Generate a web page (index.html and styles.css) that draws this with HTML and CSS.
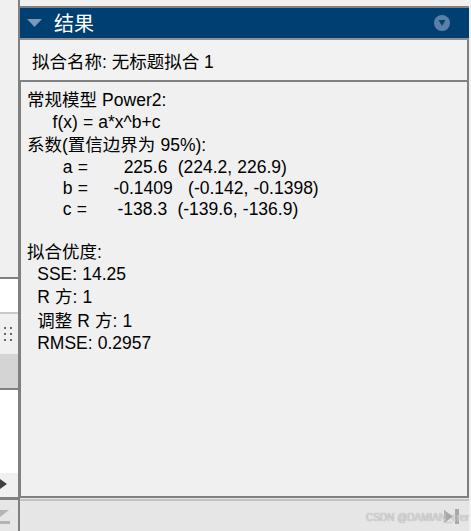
FILE: index.html
```html
<!DOCTYPE html>
<html lang="zh">
<head>
<meta charset="utf-8">
<title>结果</title>
<link rel="stylesheet" href="styles.css">
</head>
<body>
<div class="app">
  <div class="left">
    <div class="l-top"></div>
    <div class="l-line"></div>
    <div class="l-white1"></div>
    <div class="l-line-light"></div>
    <div class="l-grip">
      <div class="grip">
        <span></span><span></span><span></span><span></span><span></span><span></span>
      </div>
    </div>
    <div class="l-dark"></div>
    <div class="l-line"></div>
    <div class="l-white2"></div>
    <div class="l-arrow"><span class="tri-right"></span></div>
    <div class="l-line3"></div>
    <div class="l-bottom">
      <svg class="l-icon" width="10" height="17" viewBox="0 0 10 17">
        <polygon points="0,0 9,0 0,7" fill="#b4b4b4"/>
        <rect x="0" y="11" width="10" height="3" fill="#b4b4b4"/>
      </svg>
    </div>
  </div>
  <div class="splitter"></div>
  <div class="main">
    <div class="m-top"></div>
    <div class="m-line"></div>
    <div class="header">
      <svg class="h-tri" width="15" height="8" viewBox="0 0 15 8">
        <polygon points="0,0 15,0 7.5,8" fill="#7b98ba"/>
      </svg>
      <span class="h-title">结果</span>
      <svg class="h-btn" width="16" height="16" viewBox="0 0 16 16">
        <circle cx="8" cy="8" r="8" fill="#5b80a8"/>
        <polygon points="4.5,5 11.5,5 8,11" fill="#0a3f6e"/>
      </svg>
    </div>
    <div class="h-line"></div>
    <div class="name">拟合名称: 无标题拟合 1</div>
    <div class="results">
      <div class="ln cj">常规模型 Power2:</div>
      <div class="ln">     f(x) = a*x^b+c</div>
      <div class="ln cj">系数(置信边界为 95%):</div>
      <div class="ln">       a =       225.6  (224.2, 226.9)</div>
      <div class="ln">       b =     -0.1409   (-0.142, -0.1398)</div>
      <div class="ln">       c =      -138.3  (-139.6, -136.9)</div>
      <div class="ln blank"> </div>
      <div class="ln cj">拟合优度:</div>
      <div class="ln">  SSE: 14.25</div>
      <div class="ln cj">  R 方: 1</div>
      <div class="ln cj">  调整 R 方: 1</div>
      <div class="ln">  RMSE: 0.2957</div>
    </div>
    <div class="gap1"></div>
    <div class="gap2"></div>
    <div class="bottom">
      <svg class="b-icon" width="16" height="15" viewBox="0 0 16 15">
        <polygon points="0,1 9,7.5 0,14" fill="#a8a8a8"/>
        <rect x="11" y="0" width="4" height="15" fill="#a8a8a8"/>
      </svg>
      <span class="watermark">CSDN @DAMIAN_crer</span>
    </div>
  </div>
  <div class="edge"></div>
</div>
</body>
</html>
```

FILE: styles.css
```css
html, body {
  margin: 0;
  padding: 0;
  background: #f0f0f0;
}

body {
  font-family: "Liberation Sans", "Noto Sans CJK SC", sans-serif;
  color: #000;
}

.app {
  display: flex;
  width: 471px;
  height: 531px;
  overflow: hidden;
}

/* left strip */
.left {
  width: 18px;
  display: flex;
  flex-direction: column;
}

.l-top { height: 277px; background: #f0f0f0; }
.l-line { height: 2px; background: #808080; }
.l-white1 { height: 33px; background: #ffffff; }
.l-line-light { height: 2px; background: #c8c8c8; }
.l-grip { height: 40px; background: #f0f0f0; }

.grip {
  display: grid;
  grid-template-columns: 2px 2px;
  grid-auto-rows: 2px;
  column-gap: 4px;
  row-gap: 4px;
  padding: 13px 0 0 4px;
}

.grip span {
  background: #666666;
}

.l-dark { height: 34px; background: #d4d4d4; }
.l-white2 { height: 83px; background: #ffffff; }

.l-arrow {
  height: 24px;
  background: #f0f0f0;
  display: flex;
  align-items: flex-start;
}

.tri-right {
  margin-top: 6px;
  width: 0;
  height: 0;
  border-left: 7px solid #404040;
  border-top: 5px solid transparent;
  border-bottom: 5px solid transparent;
}

.l-line3 { height: 3px; background: #808080; }

.l-bottom {
  height: 31px;
  background: #e6e6e6;
  display: flex;
  align-items: flex-start;
}

.l-icon {
  display: block;
  margin-top: 10px;
}

.splitter {
  width: 2px;
  background: #808080;
}

.edge {
  width: 2px;
  background: #f0f0f0;
}

/* main panel */
.main {
  width: 449px;
  display: flex;
  flex-direction: column;
}

.m-top { height: 6px; background: #f0f0f0; }
.m-line { height: 2px; background: #808080; }

.header {
  height: 30px;
  background: #003f72;
  display: flex;
  align-items: center;
  padding-left: 7px;
}

.h-tri {
  display: block;
}

.h-title {
  margin-left: 12px;
  color: #ffffff;
  font-size: 20px;
  line-height: 30px;
  padding-top: 2px;
}

.h-btn {
  display: block;
  margin-left: auto;
  margin-right: 19px;
}

.h-line { height: 2px; background: #909090; }

.name {
  height: 40px;
  box-sizing: border-box;
  background: #f2f2f2;
  border-right: 2px solid #808080;
  display: flex;
  align-items: center;
  padding-left: 12px;
  font-size: 17.5px;
}

.results {
  height: 418px;
  box-sizing: border-box;
  background: #f0f0f0;
  border: 2px solid #808080;
  border-left-width: 1px;
  padding: 6px 0 0 6px;
  font-size: 17.5px;
  word-spacing: 0.25px;
}

.ln {
  height: 21px;
  line-height: 21px;
  white-space: pre;
}

.ln.cj {
  height: 24px;
  line-height: 24px;
}

.ln.blank {
  height: 20px;
}

.gap1 { height: 1px; background: #e6e6e6; }
.gap2 { height: 2px; background: #c3c3c3; }

.bottom {
  height: 30px;
  background: #e6e6e6;
  display: flex;
  justify-content: flex-end;
  align-items: flex-start;
  padding-right: 9px;
  position: relative;
}

.b-icon {
  display: block;
  margin-top: 8px;
}

.watermark {
  position: absolute;
  right: 0;
  top: 11px;
  font-size: 10px;
  color: #d8d8d8;
  text-shadow: 0 0 1px #8c8c8c;
  white-space: nowrap;
}
```
